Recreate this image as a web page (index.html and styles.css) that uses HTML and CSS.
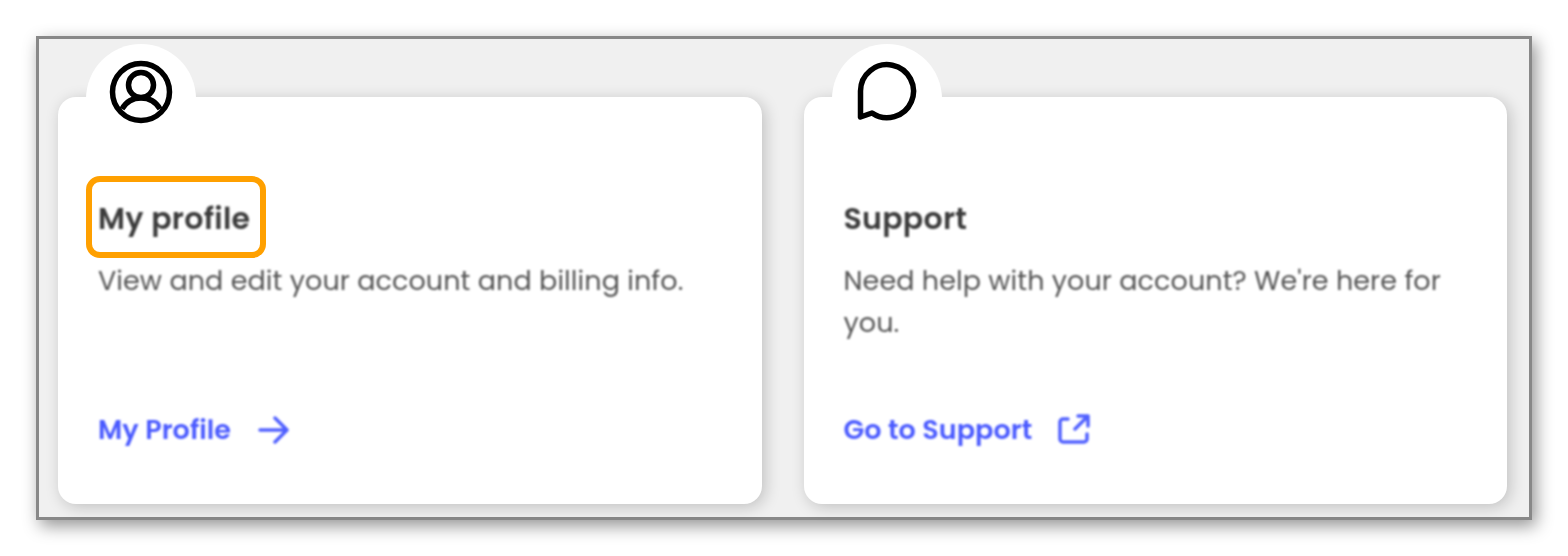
FILE: index.html
```html
<!DOCTYPE html>
<html lang="en">
<head>
<meta charset="utf-8">
<title>Account cards</title>
<link rel="stylesheet" href="styles.css">
</head>
<body>
<main class="frame">
  <section class="card">
    <div class="tab">
      <svg class="tab-icon" viewBox="0 0 64 64" fill="none" stroke="#000" stroke-width="5.500">
        <circle cx="32" cy="32" r="28.5"/>
        <circle cx="32" cy="25" r="12.5"/>
        <path d="M13 49c4-7 10-11 19-11s15 4 19 11"/>
      </svg>
    </div>
    <div class="highlight"></div>
    <h2 class="title">My profile</h2>
    <p class="desc">View and edit your account and billing info.</p>
    <a class="link" href="#">My Profile
      <svg class="link-icon" viewBox="0 0 32 32" fill="none" stroke="#5060ff" stroke-width="3.500" stroke-linecap="round" stroke-linejoin="round">
        <path d="M3 16h27M18 4l12 12-12 12"/>
      </svg>
    </a>
  </section>
  <section class="card">
    <div class="tab">
      <svg class="tab-icon" viewBox="0 0 64 64" fill="none" stroke="#000" stroke-width="5.500" stroke-linejoin="round">
        <path d="M5.500 57V31A26.500 26.500 0 1 1 17 53z"/>
      </svg>
    </div>
    <h2 class="title">Support</h2>
    <p class="desc">Need help with your account? We're here for you.</p>
    <a class="link" href="#">Go to Support
      <svg class="link-icon" viewBox="0 0 32 32" fill="none" stroke="#5060ff" stroke-width="3.500" stroke-linecap="round" stroke-linejoin="round">
        <path d="M10 5H5a3 3 0 0 0-3 3v17a3 3 0 0 0 3 3h21a3 3 0 0 0 3-3v-5"/>
        <path d="M17 15L30 2M20 2h10v10"/>
      </svg>
    </a>
  </section>
</main>
</body>
</html>
```

FILE: styles.css
```css
* { box-sizing: border-box; }

html, body {
  margin: 0;
  height: 556px;
  overflow: hidden;
  background: #fff;
}

body {
  padding: 36px 36px 0;
  font-family: "Poppins", "Inter", "Liberation Sans", sans-serif;
}

.frame {
  display: flex;
  gap: 42px;
  width: 1496px;
  height: 484px;
  padding: 58px 22px 13px 19px;
  background: #f0f0f0;
  border: 3px solid #888;
  box-shadow: 4px 6px 16px rgba(0, 0, 0, 0.42);
}

.card {
  position: relative;
  display: flex;
  flex-direction: column;
  width: 704px;
  height: 407px;
  padding: 0 40px;
  background: #fff;
  border-radius: 18px;
  box-shadow: 3px 3px 16px rgba(0, 0, 0, 0.2);
}

.tab {
  position: absolute;
  top: -53px;
  left: 28px;
  display: flex;
  justify-content: center;
  width: 110px;
  height: 80px;
  padding-top: 16px;
  background: #fff;
  border-radius: 55px 55px 0 0;
}

.tab-icon {
  display: block;
  width: 64px;
  height: 64px;
  filter: blur(0.7px);
}

.highlight {
  position: absolute;
  top: 79px;
  left: 28px;
  width: 180px;
  height: 82px;
  border: 6px solid #ffa000;
  border-radius: 14px;
}

.title {
  margin: 104px 0 0;
  font-size: 30px;
  line-height: 36px;
  font-weight: 600;
  letter-spacing: 0.3px;
  color: #3c3c3c;
  filter: blur(1px);
}

.desc {
  height: 84px;
  margin: 23px 0 0;
  font-size: 27px;
  line-height: 42px;
  font-weight: 400;
  letter-spacing: 0.08px;
  color: #555;
  filter: blur(1px);
}

.link {
  display: flex;
  align-items: center;
  gap: 26px;
  margin-top: 68px;
  font-size: 27px;
  line-height: 36px;
  font-weight: 600;
  letter-spacing: 0.05px;
  color: #4a5aff;
  text-decoration: none;
  filter: blur(1px);
}

.link-icon {
  width: 32px;
  height: 32px;
}
```
